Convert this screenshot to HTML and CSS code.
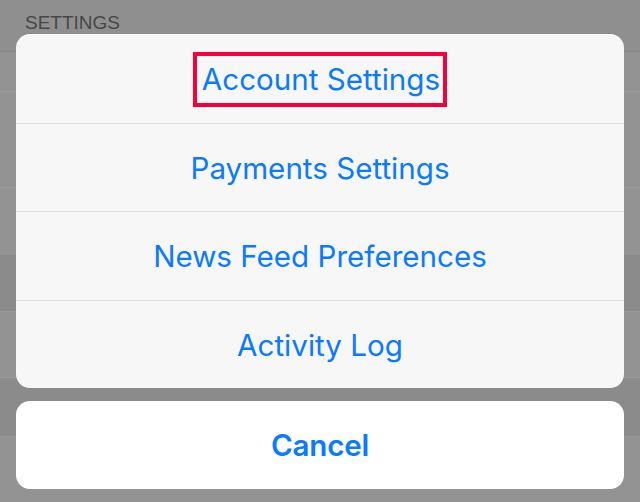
FILE: index.html
```html
<!DOCTYPE html>
<html>
<head>
<meta charset="utf-8">
<link rel="stylesheet" href="styles.css">
</head>
<body>
<div class="screen">
  <div class="bg">
    <div class="bg-header"><span class="bg-title">SETTINGS</span></div>
    <div class="bg-row h40 inset-line"></div>
    <div class="bg-row h96 inset-line"></div>
    <div class="bg-row h67"></div>
    <div class="bg-row h56 dark"></div>
    <div class="bg-row h66 line"></div>
    <div class="bg-row h59 dark line"></div>
    <div class="bg-row h66 line"></div>
  </div>
  <div class="sheet-layer">
    <div class="group">
      <div class="item tall"><span class="highlight">Account Settings</span></div>
      <div class="item">Payments Settings</div>
      <div class="item tall">News Feed Preferences</div>
      <div class="item">Activity Log</div>
    </div>
    <div class="cancel">Cancel</div>
  </div>
</div>
</body>
</html>
```

FILE: styles.css
```css
* { box-sizing: border-box; }
html, body { margin: 0; padding: 0; }
body {
  width: 640px;
  height: 502px;
  overflow: hidden;
  background: #929292;
  font-family: Inter, "Liberation Sans", Arial, sans-serif;
}
.screen {
  position: relative;
  width: 640px;
  height: 502px;
}
.bg {
  display: flex;
  flex-direction: column;
}
.bg-header {
  height: 52px;
  background: #8f8f8f;
  border-bottom: 1px solid #888888;
  padding: 12px 0 0 25px;
}
.bg-title {
  font-family: "Liberation Sans", Arial, sans-serif;
  font-size: 19px;
  color: #474747;
}
.bg-row { background: #939393; }
.bg-row.dark { background: #8b8b8b; }
.bg-row.line { border-top: 1px solid #999999; }
.bg-row.inset-line { border-bottom: 1px solid #9a9a9a; }
.h40 { height: 40px; }
.h96 { height: 96px; }
.h67 { height: 67px; }
.h56 { height: 56px; }
.h66 { height: 66px; }
.h59 { height: 59px; }

.sheet-layer {
  position: absolute;
  inset: 0;
  display: flex;
  flex-direction: column;
  gap: 13px;
  padding: 34px 16px 0 16px;
}
.group {
  background: #f7f7f7;
  border-radius: 14px;
  overflow: hidden;
  display: flex;
  flex-direction: column;
}
.item {
  height: 88px;
  display: flex;
  align-items: center;
  justify-content: center;
  color: #0a7aff;
  font-size: 29.6px;
}
.item.tall { height: 89px; }
.item + .item { border-top: 1px solid #dedede; }
.highlight {
  display: inline-block;
  border: 4px solid #f5003b;
  padding: 0 3px 0 5px;
  line-height: 47px;
  margin-top: 1px;
}
.cancel {
  height: 88px;
  background: #ffffff;
  border-radius: 14px;
  display: flex;
  align-items: center;
  justify-content: center;
  color: #0a7aff;
  font-size: 29.6px;
  font-weight: 600;
  letter-spacing: -0.2px;
}
```
